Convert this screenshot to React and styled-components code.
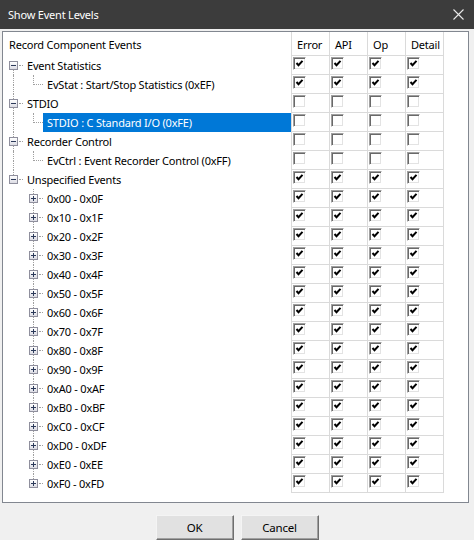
import styled, { createGlobalStyle } from "styled-components";

const GlobalStyle = createGlobalStyle`
  html, body {
    margin: 0;
    padding: 0;
    background: #f0f0f0;
  }
  * {
    box-sizing: border-box;
  }
`;

const HEX = [
  "0x00 - 0x0F", "0x10 - 0x1F", "0x20 - 0x2F", "0x30 - 0x3F",
  "0x40 - 0x4F", "0x50 - 0x5F", "0x60 - 0x6F", "0x70 - 0x7F",
  "0x80 - 0x8F", "0x90 - 0x9F", "0xA0 - 0xAF", "0xB0 - 0xBF",
  "0xC0 - 0xCF", "0xD0 - 0xDF", "0xE0 - 0xEE", "0xF0 - 0xFD",
];

const ROWS = [
  { label: "Event Statistics", checked: true, guides: [{ box: "minus", down: true }] },
  { label: "EvStat : Start/Stop Statistics (0xEF)", checked: true, guides: [{ up: true, down: true }, { up: true, hor: true }] },
  { label: "STDIO", checked: false, guides: [{ box: "minus", up: true, down: true }] },
  { label: "STDIO : C Standard I/O (0xFE)", checked: false, selected: true, guides: [{ up: true, down: true }, { up: true, hor: true }] },
  { label: "Recorder Control", checked: false, guides: [{ box: "minus", up: true, down: true }] },
  { label: "EvCtrl : Event Recorder Control (0xFF)", checked: false, guides: [{ up: true, down: true }, { up: true, hor: true }] },
  { label: "Unspecified Events", checked: true, guides: [{ box: "minus", up: true }] },
  ...HEX.map((label, i) => ({
    label,
    checked: true,
    guides: [{}, { box: "plus", up: true, down: i < HEX.length - 1 }],
  })),
];

const COLUMNS = ["Error", "API", "Op", "Detail"];

const Dialog = styled.div`
  width: 474px;
  height: 540px;
  display: flex;
  flex-direction: column;
  background: #f0f0f0;
  font-family: "Noto Sans", "Open Sans", sans-serif;
  font-size: 11px;
  letter-spacing: -0.2px;
  color: #000;
  overflow: hidden;
`;

const TitleBar = styled.div`
  height: 29px;
  flex-shrink: 0;
  display: flex;
  align-items: center;
  justify-content: space-between;
  padding-left: 8px;
  background: #3c3c3c;
  color: #fff;
  font-size: 11px;
`;

const CloseButton = styled.div`
  width: 32px;
  height: 29px;
  display: flex;
  align-items: center;
  justify-content: center;
`;

const Body = styled.div`
  padding: 2px 5px 0 2px;
`;

const Panel = styled.div`
  height: 472px;
  border: 1px solid #828790;
  background: #fff;
  overflow: hidden;
`;

const Row = styled.div`
  display: flex;
  height: ${(p) => (p.$header ? "24px" : "19px")};
`;

const TreeCell = styled.div`
  width: 288px;
  flex-shrink: 0;
  display: flex;
  align-items: stretch;
`;

const HeaderTitle = styled.div`
  width: 288px;
  flex-shrink: 0;
  display: flex;
  align-items: center;
  padding-left: 6px;
`;

const Label = styled.div`
  flex: 1;
  display: flex;
  align-items: center;
  padding-left: 4px;
  white-space: nowrap;
  background: ${(p) => (p.$selected ? "#0078d7" : "transparent")};
  color: ${(p) => (p.$selected ? "#fff" : "#000")};
`;

const CheckGroup = styled.div`
  display: flex;
  border-left: 1px solid #dadada;
`;

const CheckCell = styled.div`
  width: 38px;
  border-right: 1px solid #dadada;
  border-bottom: 1px solid #dadada;
  padding-top: 1px;
  display: flex;
  align-items: ${(p) => (p.$header ? "center" : "flex-start")};
  padding-left: ${(p) => (p.$header ? "5px" : "1px")};
`;

const Guide = styled.div`
  width: 20px;
  flex-shrink: 0;
  display: flex;
  flex-direction: column;
`;

const GuideTop = styled.div`
  height: ${(p) => (p.$short ? "5px" : "10px")};
  margin-left: 10px;
  border-left: ${(p) => (p.$line ? "1px dotted #a0a0a0" : "none")};
  border-bottom: ${(p) => (p.$hor ? "1px dotted #a0a0a0" : "none")};
`;

const GuideBottom = styled.div`
  flex: 1;
  margin-left: 10px;
  border-left: ${(p) => (p.$line ? "1px dotted #a0a0a0" : "none")};
`;

const GuideMiddle = styled.div`
  height: 9px;
  display: flex;
  padding-left: 6px;
`;

const Stub = styled.div`
  flex: 1;
  height: 5px;
  border-bottom: 1px dotted #a0a0a0;
  margin-left: 1px;
`;

const Expander = styled.div`
  width: 9px;
  height: 9px;
  border: 1px solid #8f8f9d;
  background: linear-gradient(#ffffff, #dcdce4);
  display: flex;
  align-items: center;
  justify-content: center;
`;

const CheckBox = styled.div`
  width: 13px;
  height: 13px;
  border: 1px solid;
  border-color: #a0a0a0 #ffffff #ffffff #a0a0a0;
  box-shadow: inset 1px 1px 0 #696969, inset -1px -1px 0 #e3e3e3;
  background: #fff;
  display: flex;
  align-items: center;
  justify-content: center;
`;

const Footer = styled.div`
  display: flex;
  justify-content: center;
  gap: 7px;
  padding-top: 12px;
`;

const Button = styled.button`
  width: 78px;
  height: 25px;
  font-family: inherit;
  font-size: 11.5px;
  letter-spacing: -0.2px;
  color: #000;
  background: #e1e1e1;
  border: 1px solid;
  border-color: #f4f4f4 #6e6e6e #6e6e6e #f4f4f4;
  box-shadow: inset -1px -1px 0 #a0a0a0;
  padding: 0;
`;

function TreeGuide({ box, up, down, hor }) {
  if (box) {
    return (
      <Guide>
        <GuideTop $short $line={up} />
        <GuideMiddle>
          <Expander>
            <svg width="7" height="7" viewBox="0 0 7 7">
              <rect x="1" y="3" width="5" height="1" fill="#2c3a5a" />
              {box === "plus" && <rect x="3" y="1" width="1" height="5" fill="#2c3a5a" />}
            </svg>
          </Expander>
          <Stub />
        </GuideMiddle>
        <GuideBottom $line={down} />
      </Guide>
    );
  }
  return (
    <Guide>
      <GuideTop $line={up} $hor={hor} />
      <GuideBottom $line={down} />
    </Guide>
  );
}

function Check({ checked }) {
  return (
    <CheckBox>
      {checked && (
        <svg width="9" height="9" viewBox="0 0 9 9">
          <path d="M1.5 4 L3.5 6.2 L7.5 1.8" stroke="#000" strokeWidth="2" fill="none" />
        </svg>
      )}
    </CheckBox>
  );
}

export default function App() {
  return (
    <>
      <GlobalStyle />
      <Dialog>
        <TitleBar>
          <span>Show Event Levels</span>
          <CloseButton>
            <svg width="11" height="11" viewBox="0 0 11 11">
              <path d="M0.5 0.5 L10.5 10.5 M10.5 0.5 L0.5 10.5" stroke="#e8e8e8" strokeWidth="1.1" />
            </svg>
          </CloseButton>
        </TitleBar>
        <Body>
          <Panel>
            <Row $header>
              <HeaderTitle>Record Component Events</HeaderTitle>
              <CheckGroup>
                {COLUMNS.map((c) => (
                  <CheckCell key={c} $header>
                    {c}
                  </CheckCell>
                ))}
              </CheckGroup>
            </Row>
            {ROWS.map((row) => (
              <Row key={row.label}>
                <TreeCell>
                  {row.guides.map((g, i) => (
                    <TreeGuide key={i} {...g} />
                  ))}
                  <Label $selected={row.selected}>{row.label}</Label>
                </TreeCell>
                <CheckGroup>
                  {COLUMNS.map((c) => (
                    <CheckCell key={c}>
                      <Check checked={row.checked} />
                    </CheckCell>
                  ))}
                </CheckGroup>
              </Row>
            ))}
          </Panel>
        </Body>
        <Footer>
          <Button>OK</Button>
          <Button>Cancel</Button>
        </Footer>
      </Dialog>
    </>
  );
}
